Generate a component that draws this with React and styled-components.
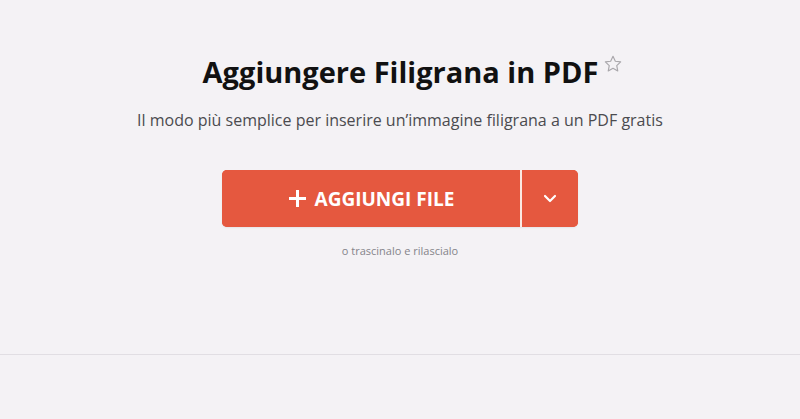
import React from 'react'
import styled, { createGlobalStyle } from 'styled-components'

const GlobalStyle = createGlobalStyle`
  html, body {
    margin: 0;
    padding: 0;
    background: #f4f2f5;
  }
  body {
    font-family: 'Open Sans', 'Noto Sans', sans-serif;
    color: #1c1c1c;
  }
`

const Page = styled.div`
  height: 419px;
  display: flex;
  flex-direction: column;
  overflow: hidden;
`

const Hero = styled.section`
  height: 355px;
  display: flex;
  flex-direction: column;
  align-items: center;
  padding-top: 50px;
  box-sizing: border-box;
  border-bottom: 1px solid #e1dee3;
`

const TitleRow = styled.div`
  display: flex;
  align-items: flex-start;
  gap: 3px;
  margin-left: 28px;
`

const Title = styled.h1`
  margin: 0;
  font-size: 29px;
  line-height: 44px;
  font-weight: 700;
  color: #111;
`

const StarButton = styled.button`
  border: 0;
  background: none;
  padding: 0;
  margin-top: 2px;
  width: 24px;
  height: 24px;
  display: flex;
  align-items: center;
  justify-content: center;
  color: #a9a7ab;
`

const Subtitle = styled.p`
  margin: 14px 0 0;
  font-size: 16px;
  line-height: 24px;
  color: #4b4b4f;
`

const ButtonGroup = styled.div`
  margin-top: 38px;
  display: flex;
  height: 57px;
  border-radius: 5px;
  overflow: hidden;
  background: #e5583f;
  box-shadow: 0 1px 2px rgba(0, 0, 0, 0.06);
`

const MainButton = styled.button`
  width: 298px;
  border: 0;
  background: #e5583f;
  color: #fff;
  font-family: inherit;
  font-size: 19px;
  font-weight: 700;
  display: flex;
  align-items: center;
  justify-content: center;
  gap: 8px;
  padding: 0;
  cursor: pointer;
`

const Divider = styled.span`
  width: 2px;
  background: #fbe9e3;
`

const DropButton = styled.button`
  width: 56px;
  border: 0;
  background: #e5583f;
  color: #fff;
  display: flex;
  align-items: center;
  justify-content: center;
  padding: 0;
  cursor: pointer;
`

const Hint = styled.p`
  margin: 16px 0 0;
  font-size: 11px;
  line-height: 15px;
  color: #85848a;
`

const Star = () => (
  <svg width='20' height='20' viewBox='0 0 24 24' fill='none' stroke='currentColor' strokeWidth='1.4' strokeLinejoin='round'>
    <path d='M12 2.8l2.8 5.9 6.4.8-4.7 4.4 1.2 6.4L12 17.2l-5.7 3.1 1.2-6.4-4.7-4.4 6.4-.8z' />
  </svg>
)

const Plus = () => (
  <svg width='19' height='19' viewBox='0 0 19 19' stroke='currentColor' strokeWidth='3'>
    <path d='M9.5 1v17M1 9.5h17' />
  </svg>
)

const Chevron = () => (
  <svg width='14' height='9' viewBox='0 0 14 9' fill='none' stroke='currentColor' strokeWidth='2.2' strokeLinecap='round' strokeLinejoin='round'>
    <path d='M2 2l5 5 5-5' />
  </svg>
)

const App = () => {
  return (
    <Page>
      <GlobalStyle />
      <Hero>
        <TitleRow>
          <Title>Aggiungere Filigrana in PDF</Title>
          <StarButton aria-label='preferiti'>
            <Star />
          </StarButton>
        </TitleRow>
        <Subtitle>Il modo più semplice per inserire un’immagine filigrana a un PDF gratis</Subtitle>
        <ButtonGroup>
          <MainButton>
            <Plus />
            AGGIUNGI FILE
          </MainButton>
          <Divider />
          <DropButton aria-label='altre opzioni'>
            <Chevron />
          </DropButton>
        </ButtonGroup>
        <Hint>o trascinalo e rilascialo</Hint>
      </Hero>
    </Page>
  )
}

export default App
